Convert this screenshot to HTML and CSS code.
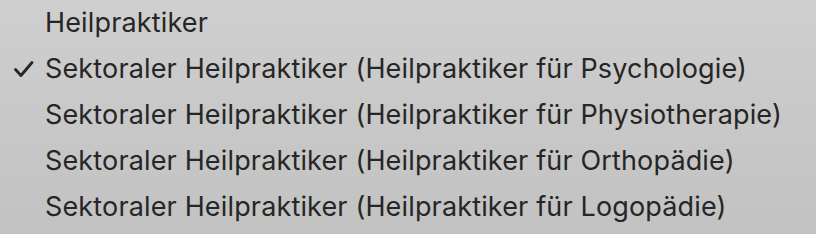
FILE: index.html
```html
<!DOCTYPE html>
<html>

<head>
    <meta charset="UTF-8">
    <title>Beruf auswählen</title>
    <link rel="stylesheet" href="styles.css">
</head>

<body>
    <ul class="menu">
        <li class="item">Heilpraktiker</li>
        <li class="item checked">
            <svg class="check" width="20" height="18" viewBox="0 0 20 18">
                <polyline points="1.5,8.5 7,14.5 18,1.5" />
            </svg>
            Sektoraler Heilpraktiker (Heilpraktiker für Psychologie)
        </li>
        <li class="item">Sektoraler Heilpraktiker (Heilpraktiker für Physiotherapie)</li>
        <li class="item">Sektoraler Heilpraktiker (Heilpraktiker für Orthopädie)</li>
        <li class="item">Sektoraler Heilpraktiker (Heilpraktiker für Logopädie)</li>
    </ul>
</body>

</html>
```

FILE: styles.css
```css
html,
body {
    margin: 0;
    height: 100%;
}

body {
    background: linear-gradient(180deg, #cfcfcf 0%, #c8c8c8 50%, #c2c2c2 100%);
    font-family: Inter, "Noto Sans", sans-serif;
    color: #262626;
    overflow: hidden;
}

.menu {
    list-style: none;
    margin: 0;
    padding: 0 0 0 45px;
}

.item {
    position: relative;
    font-size: 27px;
    letter-spacing: 0.15px;
    line-height: 46px;
    height: 46px;
    white-space: nowrap;
}

.check {
    position: absolute;
    left: -31px;
    top: 15px;
}

.check polyline {
    fill: none;
    stroke: #262626;
    stroke-width: 2.8;
    stroke-linecap: round;
    stroke-linejoin: round;
}
```
